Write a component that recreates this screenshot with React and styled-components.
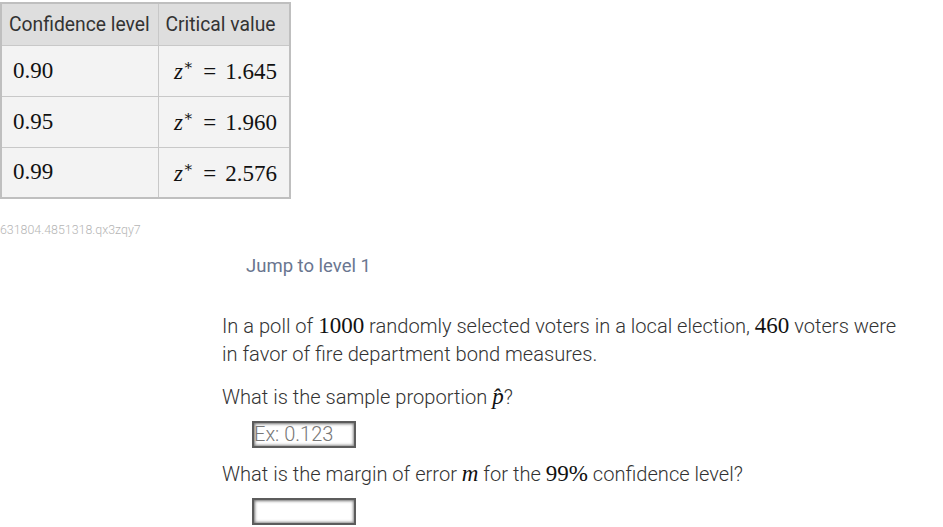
import React from "react";
import styled, { createGlobalStyle } from "styled-components";

const Global = createGlobalStyle`
  html, body { margin: 0; padding: 0; background: #fff; }
  body { font-family: Roboto, "Liberation Sans", sans-serif; color: #333; }
`;

const Page = styled.div`
  width: 943px;
  height: 527px;
  overflow: hidden;
  display: flex;
  flex-direction: column;
`;

const Table = styled.table`
  border-collapse: collapse;
  border: 2px solid #bfbfbf;
  margin-top: 2px;
  width: 289px;
  table-layout: fixed;
`;

const Th = styled.th`
  background: #dedede;
  border: 1px solid #c8c8c8;
  font-family: Roboto, sans-serif;
  font-weight: 400;
  font-size: 19.3px;
  color: #333;
  text-align: left;
  height: 42px;
  padding: 0 0 0 7px;
  width: ${(p) => p.$w}px;
  white-space: nowrap;
  box-sizing: border-box;
`;

const Td = styled.td`
  background: #f3f3f3;
  border: 1px solid #c8c8c8;
  height: 51px;
  padding: 0 12px 0 11px;
  text-align: ${(p) => (p.$right ? "right" : "left")};
  white-space: nowrap;
  box-sizing: border-box;
`;

const Math = styled.span`
  font-family: "Liberation Serif", "DejaVu Serif", serif;
  font-size: ${(p) => p.$size || 23}px;
  color: #111;
  font-style: ${(p) => (p.$italic ? "italic" : "normal")};
`;

const Sup = styled.sup`
  font-size: 15px;
  vertical-align: 9px;
`;

const Eq = styled.span`
  margin: 0 9px 0 10px;
`;

const Id = styled.div`
  font-size: 12.4px;
  color: #b5b5b5;
  font-weight: 300;
  margin-top: 23px;
`;

const Content = styled.div`
  padding-left: 222px;
  display: flex;
  flex-direction: column;
`;

const Jump = styled.div`
  color: #6a7690;
  font-size: 18.5px;
  margin-left: 24px;
  margin-top: 18px;
`;

const Para = styled.p`
  margin: 0;
  font-weight: 300;
  font-size: 20.1px;
  line-height: 28px;
  color: #333;
  width: 710px;
  margin-top: ${(p) => p.$top || 0}px;
`;

const Input = styled.div`
  box-sizing: border-box;
  width: 104px;
  height: 27px;
  margin-left: 30px;
  margin-top: ${(p) => p.$top || 0}px;
  border: 2px solid #5c5c5c;
  box-shadow: inset 1px 1px 3px #777, inset -1px -1px 3px #999;
  background: #fff;
  font-family: Roboto, sans-serif;
  font-weight: 300;
  font-size: 20px;
  color: #777;
  line-height: 23px;
  padding-left: 0px;
`;

const rows = [
  ["0.90", "1.645"],
  ["0.95", "1.960"],
  ["0.99", "2.576"],
];

export default function App() {
  return (
    <Page>
      <Global />
      <Table>
        <thead>
          <tr>
            <Th $w={157}>Confidence level</Th>
            <Th $w={132}>Critical value</Th>
          </tr>
        </thead>
        <tbody>
          {rows.map(([a, b]) => (
            <tr key={a}>
              <Td>
                <Math>{a}</Math>
              </Td>
              <Td $right>
                <Math $italic>z</Math>
                <Math>
                  <Sup>∗</Sup>
                  <Eq>=</Eq>
                  {b}
                </Math>
              </Td>
            </tr>
          ))}
        </tbody>
      </Table>
      <Id>631804.4851318.qx3zqy7</Id>
      <Content>
        <Jump>Jump to level 1</Jump>
        <Para $top={35}>
          In a poll of <Math $size={23}>1000</Math> randomly selected voters in a local election,{" "}
          <Math $size={23}>460</Math> voters were
          <br />
          in favor of fire department bond measures.
        </Para>
        <Para $top={15}>
          What is the sample proportion <Math $italic $size={23}>p̂</Math>?
        </Para>
        <Input $top={10}>Ex: 0.123</Input>
        <Para $top={12}>
          What is the margin of error <Math $italic $size={23}>m</Math> for the{" "}
          <Math $size={23}>99%</Math> confidence level?
        </Para>
        <Input $top={10} />
      </Content>
    </Page>
  );
}
